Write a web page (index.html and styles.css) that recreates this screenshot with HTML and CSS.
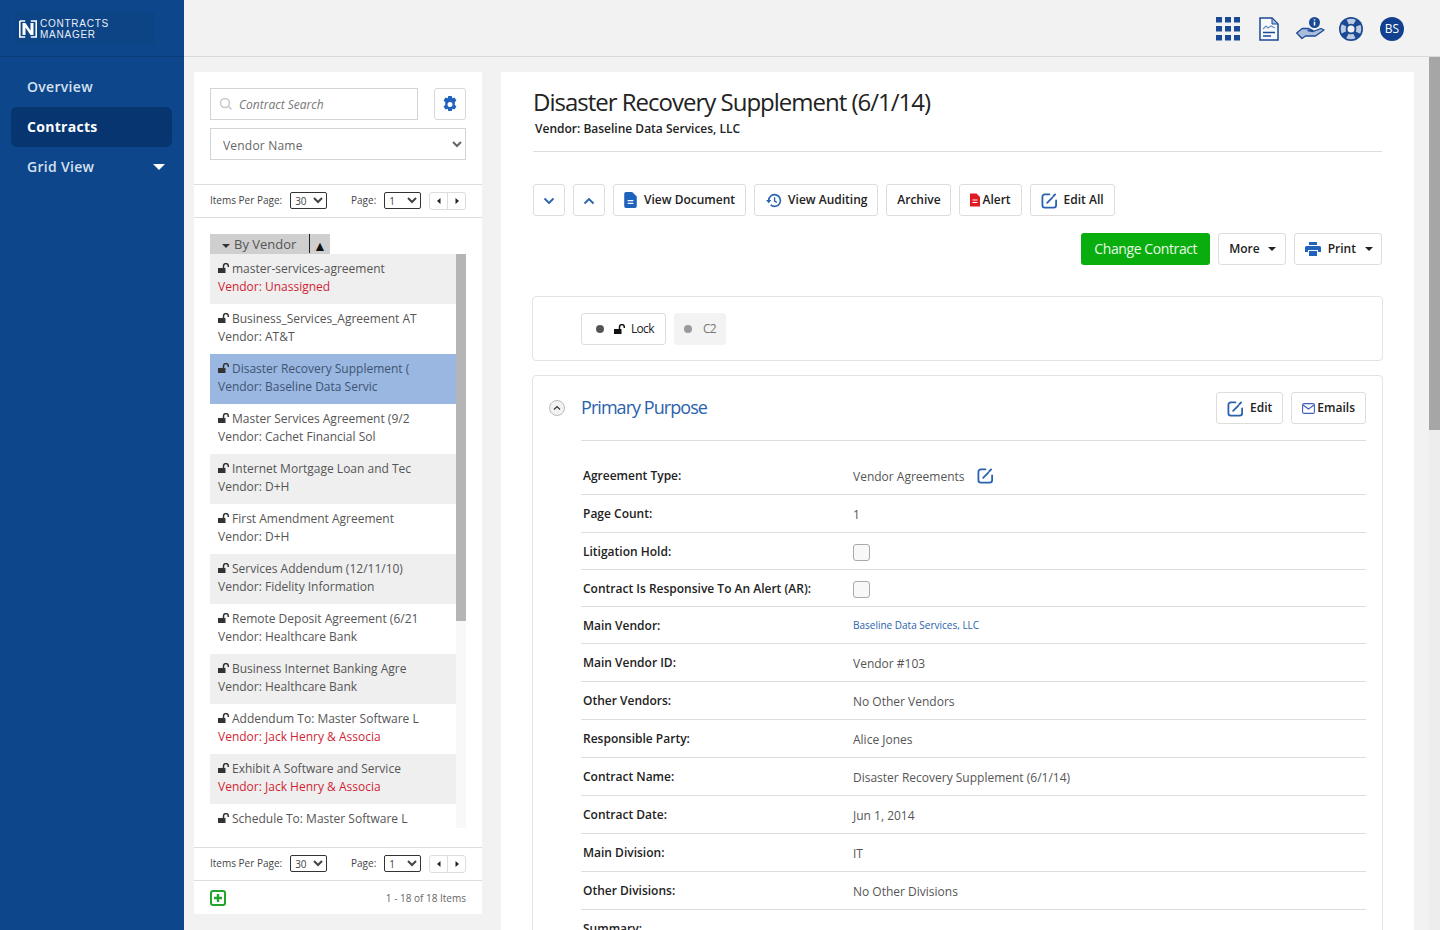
FILE: index.html
```html
<!DOCTYPE html>
<html lang="en">
<head>
<meta charset="utf-8">
<title>Contracts Manager</title>
<link rel="stylesheet" href="styles.css">
</head>
<body>
<svg class="defs" width="0" height="0" aria-hidden="true">
  <symbol id="lock" viewBox="0 0 12 10"><path d="M0 5h7.500v5H0z" fill="currentColor"/><path d="M5.500 5V3a2.400 2.400 0 0 1 4.800 0v1" fill="none" stroke="currentColor" stroke-width="1.500"/></symbol>
  <symbol id="edit" viewBox="0 0 18 18"><path d="M9 2.500H4A2.500 2.500 0 0 0 1.500 5v9A2.500 2.500 0 0 0 4 16.500h9.500A2.500 2.500 0 0 0 16 14V9" fill="none" stroke="currentColor" stroke-width="1.900" stroke-linecap="round"/><path d="M6.500 11.500L12 6M13 4.500l2-2" fill="none" stroke="currentColor" stroke-width="1.900" stroke-linecap="round"/></symbol>
  <symbol id="left" viewBox="0 0 6 8"><path d="M4.500 1v6L1 4z" fill="currentColor"/></symbol>
  <symbol id="right" viewBox="0 0 6 8"><path d="M1.500 1v6L5 4z" fill="currentColor"/></symbol>
</svg>
<div class="app">
  <aside class="sidebar">
    <div class="brand">
      <div class="brand-box">
        <svg class="brand-mark" viewBox="0 0 18 18" aria-hidden="true"><path d="M.8 1h5.400M11.800 1h5.400V17h-5.400M6.200 17H.8V1" fill="none" stroke="#fff" stroke-width="1.600"/><path d="M3.500 15V3h3l5 7.500V3h3v12h-3l-5-7.500V15z" fill="#fff"/></svg>
        <span class="brand-text">CONTRACTS<br>MANAGER</span>
      </div>
    </div>
    <nav class="nav">
      <a class="nav-item">Overview</a>
      <a class="nav-item active">Contracts</a>
      <a class="nav-item">Grid View<span class="nav-caret"></span></a>
    </nav>
  </aside>
  <div class="workspace">
    <header class="topbar">
      <svg class="top-icon icon-grid" width="24" height="24" viewBox="0 0 24 24" aria-hidden="true"><g fill="#1b4a94"><rect width="6" height="5.500"/><rect x="9" width="6" height="5.500"/><rect x="18" width="6" height="5.500"/><rect y="9" width="6" height="5.500"/><rect x="9" y="9" width="6" height="5.500"/><rect x="18" y="9" width="6" height="5.500"/><rect y="18" width="6" height="5.500"/><rect x="9" y="18" width="6" height="5.500"/><rect x="18" y="18" width="6" height="5.500"/></g></svg>
      <svg class="top-icon icon-doc" width="20" height="24" viewBox="0 0 20 24" aria-hidden="true"><path d="M1 1h12l6 6v16H1z" fill="#f7f9fc" stroke="#1b4a94" stroke-width="1.500"/><path d="M13 1v6h6z" fill="#a9bcdb" stroke="#1b4a94" stroke-width="1"/><path d="M4 12l3-3 2 2 3-2 4 2" fill="none" stroke="#6d8fc0" stroke-width="1.200"/><path d="M4 15.500h12M4 19h8" stroke="#1b4a94" stroke-width="1.300"/></svg>
      <svg class="top-icon icon-hand" width="29" height="24" viewBox="0 0 29 24" aria-hidden="true"><circle cx="18.500" cy="5.500" r="5.500" fill="#1b4a94"/><path d="M18.500 4.800v3.800M18.500 2.300v1.300" stroke="#fff" stroke-width="1.500"/><path d="M.7 16l5.500-4.500h6.500l4.300 2h-5l5 1 8-3 3 1.500-8.500 6H9.500l-3.500 2.500z" fill="#a9bcdb" stroke="#1b4a94" stroke-width="1.300" stroke-linejoin="round"/></svg>
      <svg class="top-icon icon-ring" width="24" height="24" viewBox="0 0 24 24" aria-hidden="true"><circle cx="12" cy="12" r="12" fill="#1b4a94"/><circle cx="12" cy="12" r="7.800" fill="none" stroke="#bccbe3" stroke-width="5" stroke-dasharray="7.250 5" stroke-dashoffset="3.600"/><circle cx="12" cy="12" r="3.500" fill="#f2f2f2"/></svg>
      <span class="avatar">BS</span>
    </header>
    <main class="content">
      <section class="list-panel">
        <div class="search-block">
          <div class="search-row">
            <div class="search-box">
              <svg class="search-icon" width="14" height="14" viewBox="0 0 14 14" aria-hidden="true"><circle cx="6" cy="6" r="4.500" fill="none" stroke="#c8c8c8" stroke-width="1.500"/><path d="M9.500 9.500l3 3" stroke="#c8c8c8" stroke-width="1.500"/></svg>
              <span class="search-text">Contract Search</span>
            </div>
            <button class="gear-btn" type="button" aria-label="Settings"><svg width="16" height="17" viewBox="0 0 16 17" aria-hidden="true"><path fill-rule="evenodd" d="M6.200 0h3.600l.5 2.300 2.200-.8 1.900 3.100-1.700 1.700a6 6 0 0 1 0 2.400l1.700 1.700-1.900 3.100-2.200-.8-.5 2.300H6.200l-.5-2.300-2.200.8-1.900-3.100 1.700-1.700a6 6 0 0 1 0-2.400L1.600 4.600l1.900-3.100 2.200.8zM8 6a2.500 2.500 0 1 0 0 5 2.500 2.500 0 0 0 0-5z" fill="#1f63bd"/></svg></button>
          </div>
          <select class="vendor-select"><option>Vendor Name</option></select>
        </div>
        <div class="pager pager-top">
          <label class="pager-label">Items Per Page:</label>
          <select class="mini-select"><option>30</option></select>
          <label class="pager-label page-label">Page:</label>
          <select class="mini-select"><option>1&nbsp;&nbsp;</option></select>
          <div class="pager-arrows"><span><svg width="6" height="8"><use href="#left"/></svg></span><span><svg width="6" height="8"><use href="#right"/></svg></span></div>
        </div>
        <div class="list-wrap">
          <div class="group-head"><span class="group-name"><i class="group-caret"></i>By Vendor</span><span class="group-sort">▲</span></div>
          <div class="list">
            <div class="list-items">
              <div class="item alt"><div class="item-title"><svg class="lock" width="12" height="10"><use href="#lock"/></svg>master-services-agreement</div><div class="item-sub red">Vendor: Unassigned</div></div>
              <div class="item"><div class="item-title"><svg class="lock" width="12" height="10"><use href="#lock"/></svg>Business_Services_Agreement AT</div><div class="item-sub">Vendor: AT&amp;T</div></div>
              <div class="item selected"><div class="item-title"><svg class="lock" width="12" height="10"><use href="#lock"/></svg>Disaster Recovery Supplement (</div><div class="item-sub">Vendor: Baseline Data Servic</div></div>
              <div class="item"><div class="item-title"><svg class="lock" width="12" height="10"><use href="#lock"/></svg>Master Services Agreement (9/2</div><div class="item-sub">Vendor: Cachet Financial Sol</div></div>
              <div class="item alt"><div class="item-title"><svg class="lock" width="12" height="10"><use href="#lock"/></svg>Internet Mortgage Loan and Tec</div><div class="item-sub">Vendor: D+H</div></div>
              <div class="item"><div class="item-title"><svg class="lock" width="12" height="10"><use href="#lock"/></svg>First Amendment Agreement</div><div class="item-sub">Vendor: D+H</div></div>
              <div class="item alt"><div class="item-title"><svg class="lock" width="12" height="10"><use href="#lock"/></svg>Services Addendum (12/11/10)</div><div class="item-sub">Vendor: Fidelity Information</div></div>
              <div class="item"><div class="item-title"><svg class="lock" width="12" height="10"><use href="#lock"/></svg>Remote Deposit Agreement (6/21</div><div class="item-sub">Vendor: Healthcare Bank</div></div>
              <div class="item alt"><div class="item-title"><svg class="lock" width="12" height="10"><use href="#lock"/></svg>Business Internet Banking Agre</div><div class="item-sub">Vendor: Healthcare Bank</div></div>
              <div class="item"><div class="item-title"><svg class="lock" width="12" height="10"><use href="#lock"/></svg>Addendum To: Master Software L</div><div class="item-sub red">Vendor: Jack Henry &amp; Associa</div></div>
              <div class="item alt"><div class="item-title"><svg class="lock" width="12" height="10"><use href="#lock"/></svg>Exhibit A Software and Service</div><div class="item-sub red">Vendor: Jack Henry &amp; Associa</div></div>
              <div class="item item-last"><div class="item-title"><svg class="lock" width="12" height="10"><use href="#lock"/></svg>Schedule To: Master Software L</div></div>
            </div>
            <div class="list-scroll"><div class="list-thumb"></div></div>
          </div>
        </div>
        <div class="pager pager-bottom">
          <label class="pager-label">Items Per Page:</label>
          <select class="mini-select"><option>30</option></select>
          <label class="pager-label page-label">Page:</label>
          <select class="mini-select"><option>1&nbsp;&nbsp;</option></select>
          <div class="pager-arrows"><span><svg width="6" height="8"><use href="#left"/></svg></span><span><svg width="6" height="8"><use href="#right"/></svg></span></div>
        </div>
        <div class="list-foot">
          <svg width="16" height="16" viewBox="0 0 16 16" aria-hidden="true"><rect x="1" y="1" width="14" height="14" rx="2" fill="#fff" stroke="#22a52c" stroke-width="2"/><path d="M8 4v8M4 8h8" stroke="#22a52c" stroke-width="2.400"/></svg>
          <span class="foot-count">1 - 18 of 18 Items</span>
        </div>
      </section>
      <section class="detail">
        <h1 class="title">Disaster Recovery Supplement (6/1/14)</h1>
        <p class="vendor-line">Vendor: Baseline Data Services, LLC</p>
        <hr class="rule">
        <div class="toolbar">
          <button class="btn square" type="button" aria-label="Next"><svg width="12" height="8" viewBox="0 0 12 8" aria-hidden="true"><path d="M1.500 1.500L6 6l4.500-4.500" fill="none" stroke="#2a62ad" stroke-width="1.800"/></svg></button>
          <button class="btn square" type="button" aria-label="Previous"><svg width="12" height="8" viewBox="0 0 12 8" aria-hidden="true"><path d="M1.500 6.500L6 2l4.500 4.500" fill="none" stroke="#2a62ad" stroke-width="1.800"/></svg></button>
          <button class="btn btn-doc" type="button"><svg width="13" height="16" viewBox="0 0 11 14" aria-hidden="true"><path d="M0 1.500A1.500 1.500 0 0 1 1.500 0H7l4 4v8.500a1.500 1.500 0 0 1-1.500 1.500h-8A1.500 1.500 0 0 1 0 12.500z" fill="#1f63bd"/><path d="M3 7.500h5M3 10h5" stroke="#fff" stroke-width="1.200"/></svg>View Document</button>
          <button class="btn" type="button"><svg width="17" height="15" viewBox="0 0 16 14" aria-hidden="true"><path d="M3.500 7a5.500 5.500 0 1 1 1.800 4.100" fill="none" stroke="#2a62ad" stroke-width="1.500"/><path d="M1 6.500h5L3.500 9.500z" fill="#2a62ad"/><path d="M9 4v3.500l2.200 1.200" fill="none" stroke="#2a62ad" stroke-width="1.300"/></svg>View Auditing</button>
          <button class="btn btn-archive" type="button">Archive</button>
          <button class="btn tight" type="button"><svg width="10" height="14" viewBox="0 0 10 13" aria-hidden="true"><path d="M0 0h6.500L10 3.500V13H0z" fill="#e01b24"/><path d="M2.500 6.500h5M2.500 9h5" stroke="#fff" stroke-width="1"/></svg>Alert</button>
          <button class="btn" type="button"><svg class="edit-icon" width="17" height="17"><use href="#edit"/></svg>Edit All</button>
        </div>
        <div class="action-row">
          <button class="btn-green" type="button">Change Contract</button>
          <button class="btn btn-more" type="button">More<i class="caret"></i></button>
          <button class="btn btn-print" type="button"><svg width="16" height="14" viewBox="0 0 16 14" aria-hidden="true"><path d="M4 0h8v3H4zM1.500 4h13A1.500 1.500 0 0 1 16 5.500V10h-3V8H3v2H0V5.500A1.500 1.500 0 0 1 1.500 4zM4 9h8v5H4z" fill="#1f63bd"/></svg>Print<i class="caret"></i></button>
        </div>
        <div class="card lock-card">
          <div class="chip chip-lock"><i class="dot dark"></i><svg class="chip-lock-icon" width="12" height="10"><use href="#lock"/></svg>Lock</div>
          <div class="chip chip-c2"><i class="dot grey"></i>C2</div>
        </div>
        <div class="card purpose">
          <div class="purpose-head">
            <span class="collapse"><svg width="8" height="6" viewBox="0 0 8 6" aria-hidden="true"><path d="M1 4.500L4 1.500l3 3" fill="none" stroke="#333" stroke-width="1.200"/></svg></span>
            <div class="purpose-title">
              <h2>Primary Purpose</h2>
              <div class="purpose-actions">
                <button class="btn" type="button"><svg class="edit-icon" width="17" height="17"><use href="#edit"/></svg>Edit</button>
                <button class="btn tight" type="button"><svg width="13" height="11" viewBox="0 0 13 11" aria-hidden="true"><rect x=".6" y=".6" width="11.800" height="9.800" rx="1.500" fill="none" stroke="#3f5fbf" stroke-width="1.100"/><path d="M1 2l5.500 4L12 2" fill="none" stroke="#3f5fbf" stroke-width="1.100"/></svg>Emails</button>
              </div>
            </div>
          </div>
          <dl class="fields">
            <div class="field f-first"><dt>Agreement Type:</dt><dd>Vendor Agreements<svg class="edit-icon field-edit" width="17" height="17"><use href="#edit"/></svg></dd></div>
            <div class="field f-38"><dt>Page Count:</dt><dd>1</dd></div>
            <div class="field f-37"><dt>Litigation Hold:</dt><dd><i class="check"></i></dd></div>
            <div class="field f-37"><dt>Contract Is Responsive To An Alert (AR):</dt><dd><i class="check"></i></dd></div>
            <div class="field f-37"><dt>Main Vendor:</dt><dd class="link">Baseline Data Services, LLC</dd></div>
            <div class="field f-38"><dt>Main Vendor ID:</dt><dd>Vendor #103</dd></div>
            <div class="field f-38"><dt>Other Vendors:</dt><dd>No Other Vendors</dd></div>
            <div class="field f-38"><dt>Responsible Party:</dt><dd>Alice Jones</dd></div>
            <div class="field f-38"><dt>Contract Name:</dt><dd>Disaster Recovery Supplement (6/1/14)</dd></div>
            <div class="field f-38"><dt>Contract Date:</dt><dd>Jun 1, 2014</dd></div>
            <div class="field f-38"><dt>Main Division:</dt><dd>IT</dd></div>
            <div class="field f-38"><dt>Other Divisions:</dt><dd>No Other Divisions</dd></div>
            <div class="field f-38"><dt>Summary:</dt><dd></dd></div>
          </dl>
        </div>
      </section>
      <div class="page-scroll"><div class="page-thumb"></div></div>
    </main>
  </div>
</div>
</body>
</html>
```
FILE: styles.css
```css
* { box-sizing: border-box; }
html, body { margin: 0; height: 100%; overflow: hidden; }
body { font-family: "Open Sans", "Liberation Sans", sans-serif; font-size: 12px; color: #333; background: #f2f2f2; }
.defs { position: absolute; }
button { font-family: inherit; }
.app { display: flex; height: 930px; }

.sidebar { width: 184px; flex: none; background: #0d468a; color: #fff; }
.brand { height: 57px; border-bottom: 1px solid #0b3d7a; padding: 12px 15px 0 15px; }
.brand-box { display: flex; align-items: center; gap: 3px; height: 33px; padding: 1px 0 0 4px; background: #0d4486; width: 140px; }
.brand-mark { width: 18px; height: 18px; flex: none; }
.brand-text { font-family: "Liberation Sans", sans-serif; font-size: 10px; line-height: 11px; letter-spacing: .75px; color: #e9eef6; }
.nav { padding: 10px 12px 10px 11px; display: flex; flex-direction: column; }
.nav-item { height: 40px; padding: 0 16px 2px; display: flex; align-items: center; font-size: 14px; font-weight: 600; letter-spacing: .3px; color: #d5e1f0; border-radius: 6px; justify-content: space-between; }
.nav-item.active { background: #07356f; color: #fff; font-weight: 700; }
.nav-caret { width: 0; height: 0; border: 6px solid transparent; border-top: 6px solid #fff; border-bottom: 0; margin-right: -9px; margin-top: 2px; }

.workspace { flex: 1; min-width: 0; display: flex; flex-direction: column; }
.topbar { height: 57px; flex: none; border-bottom: 1px solid #d9d9d9; display: flex; justify-content: flex-end; align-items: center; padding: 1px 36px 0 0; }
.top-icon { flex: none; }
.icon-doc { margin-left: 19px; }
.icon-hand { margin-left: 17px; }
.icon-ring { margin-left: 14px; }
.avatar { width: 24px; height: 24px; margin-left: 17px; border-radius: 50%; background: #12418f; color: #fff; font-size: 12px; display: flex; align-items: center; justify-content: center; }

.content { flex: 1; min-height: 0; display: flex; align-items: flex-start; padding: 15px 0 0 10px; position: relative; overflow: hidden; }
.page-scroll { position: absolute; top: 0; right: 0; bottom: 0; width: 11px; background: #ededed; }
.page-thumb { height: 373px; width: 100%; background: #a6a6a6; }

.list-panel { width: 288px; height: 842px; flex: none; background: #fff; display: flex; flex-direction: column; }
.search-block { padding: 16px 16px 0; height: 113px; border-bottom: 1px solid #ddd; flex: none; }
.search-row { display: flex; justify-content: space-between; margin-bottom: 8px; }
.search-box { width: 208px; height: 32px; border: 1px solid #d4d4d4; display: flex; align-items: center; padding-left: 8px; }
.search-text { font-size: 12px; font-style: italic; color: #777; margin-left: 6px; }
.gear-btn { width: 32px; height: 32px; border: 1px solid #d9d9d9; border-radius: 3px; background: #fff; padding: 0; display: flex; align-items: center; justify-content: center; }
.vendor-select { width: 256px; height: 32px; display: block; border: 1px solid #d4d4d4; border-radius: 0; background: #fff; color: #666; font: 12px "Open Sans", sans-serif; letter-spacing: .2px; padding: 2px 0 0 8px; }
.pager { height: 33px; flex: none; display: flex; align-items: center; padding: 0 16px 1px; border-bottom: 1px solid #ddd; }
.pager-bottom { border-top: 1px solid #ddd; height: 34px; }
.pager-label { font-size: 10px; line-height: 12px; margin-top: -2px; color: #444; white-space: nowrap; }
.page-label { margin-left: 24px; margin-right: 8px; }
.pager .pager-label:first-child { margin-right: 8px; }
.mini-select { width: 37px; height: 17px; border: 1px solid #333; border-radius: 2px; background: #fff; font: 10px "Open Sans", sans-serif; color: #444; padding: 0; }
.pager-arrows { display: flex; margin-left: 8px; border: 1px solid #ddd; border-radius: 3px; height: 18px; width: 37px; }
.pager-arrows span { flex: 1; display: flex; align-items: center; justify-content: center; color: #222; }
.pager-arrows span + span { border-left: 1px solid #ddd; }

.list-wrap { flex: 1; min-height: 0; padding: 16px 16px 0; overflow: hidden; }
.group-head { display: flex; height: 20px; width: 120px; background: #cfcfcf; }
.group-name { width: 100px; border-right: 1px solid #222; height: 19px; font-size: 13px; color: #555; padding: 2px 0 0 12px; display: flex; align-items: center; line-height: 1; }
.group-caret { width: 0; height: 0; border: 4px solid transparent; border-top: 4px solid #333; border-bottom: 0; margin-right: 4px; margin-top: 2px; }
.group-sort { flex: 1; text-align: center; color: #111; font-size: 14px; line-height: 24px; overflow: hidden; }
.list { display: flex; height: 574px; overflow: hidden; }
.list-items { flex: 1; min-width: 0; overflow: hidden; }
.list-scroll { width: 10px; flex: none; background: #f8f8f8; }
.list-thumb { height: 367px; background: #b5b5b5; }
.item { height: 50px; padding: 6px 8px 0; font-size: 12px; line-height: 18px; color: #555; white-space: nowrap; overflow: hidden; }
.item-last { height: 24px; }
.item.alt { background: #efefef; }
.item.selected { background: #99b7e0; color: #3f5474; }
.item-sub.red { color: #d01f35; }
.lock { color: #333; margin-right: 2px; }
.list-foot { height: 33px; flex: none; display: flex; align-items: center; justify-content: space-between; padding: 0 16px; }
.foot-count { font-size: 10px; color: #666; }

.detail { width: 913px; margin-left: 19px; height: 920px; flex: none; background: #fff; padding: 15px 32px 0; overflow: hidden; }
.title { margin: 0; font-size: 24px; line-height: 30px; font-weight: 400; letter-spacing: -1px; color: #222; }
.vendor-line { margin: 3px 0 0 2px; font-size: 12px; line-height: 18px; font-weight: 600; color: #222; }
.rule { margin: 13px 0 0; border: 0; border-top: 1px solid #ddd; }
.toolbar { display: flex; gap: 8px; margin-top: 32px; }
.btn { height: 32px; padding: 0 10px 2px; border: 1px solid #ddd; border-radius: 3px; background: #fff; display: inline-flex; align-items: center; gap: 6px; font-size: 12px; font-weight: 600; color: #222; white-space: nowrap; }
.btn svg { margin-top: 2px; flex: none; }
.btn.square { width: 32px; padding: 0; justify-content: center; }
.btn.tight { gap: 2px; }
.btn-doc { gap: 7px; }
.btn-archive { width: 65px; padding-left: 0; padding-right: 0; justify-content: center; }
.btn-more { padding-right: 9px; }
.btn-print { gap: 7px; padding-right: 8px; }
.edit-icon { color: #2a62ad; }
.action-row { display: flex; justify-content: flex-end; gap: 8px; margin-top: 17px; }
.btn-green { height: 32px; width: 129px; padding: 0 0 2px; border: 0; border-radius: 3px; background: #09ad0d; color: #e8f8e8; font-size: 14px; letter-spacing: -.4px; }
.caret { width: 0; height: 0; border: 4px solid transparent; border-top: 4px solid #222; border-bottom: 0; margin-left: 2px; margin-top: 2px; }
.card { width: 851px; margin-left: -1px; border: 1px solid #e3e3e3; border-radius: 4px; }
.lock-card { height: 65px; margin-top: 31px; padding: 16px 48px; display: flex; gap: 8px; }
.chip { height: 32px; display: flex; align-items: center; padding-bottom: 1px; font-size: 12px; letter-spacing: -.7px; border-radius: 3px; }
.chip-lock { border: 1px solid #ddd; width: 85px; padding-left: 14px; color: #222; }
.chip-lock-icon { color: #111; margin-left: 10px; margin-right: 5px; }
.chip-c2 { background: #f3f3f3; width: 52px; padding-left: 10px; color: #777; }
.dot { width: 8px; height: 8px; border-radius: 50%; flex: none; }
.dot.dark { background: #555; }
.dot.grey { background: #999; margin-right: 11px; }
.purpose { margin-top: 14px; padding: 0 16px; height: 600px; }
.purpose-head { display: flex; align-items: flex-start; gap: 16px; }
.collapse { width: 16px; height: 16px; flex: none; margin-top: 24px; border: 1px solid #bbb; border-radius: 50%; background: #f2f2f2; display: flex; align-items: center; justify-content: center; }
.purpose-title { flex: 1; height: 65px; border-bottom: 1px solid #ddd; display: flex; justify-content: space-between; align-items: flex-start; padding-top: 16px; }
.purpose-title h2 { margin: -1px 0 0; font-size: 18px; line-height: 32px; font-weight: 400; color: #2a62ad; letter-spacing: -.95px; }
.purpose-actions { display: flex; gap: 8px; }
.fields { margin: 0 0 0 32px; }
.field { display: flex; border-bottom: 1px solid #ddd; align-items: center; }
.f-first { height: 54px; padding-top: 16px; }
.f-38 { height: 38px; }
.f-37 { height: 37px; }
.field dt { width: 272px; flex: none; padding-left: 2px; font-size: 12px; font-weight: 600; color: #222; }
.field dd { margin: 2px 0 0; font-size: 12px; color: #555; display: flex; align-items: center; }
.field-edit { margin-left: 12px; margin-top: -2px; }
.field dd.link { color: #2a62ad; font-size: 10px; margin-top: 0; }
.check { display: block; width: 17px; height: 17px; border: 1px solid #aaa; border-radius: 3px; background: #f8f8f8; }
```
